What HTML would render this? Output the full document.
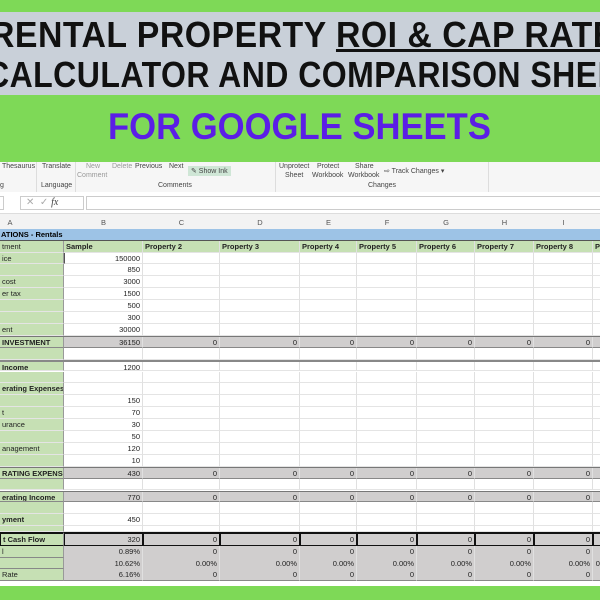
<!DOCTYPE html>
<html><head><meta charset="utf-8"><style>
*{margin:0;padding:0;box-sizing:border-box}
body{width:600px;height:600px;overflow:hidden;position:relative;background:#7ed957;font-family:"Liberation Sans",sans-serif}
.band{position:absolute;left:0;top:12px;width:600px;height:83px;background:#c9d0d9}
.t{position:absolute;white-space:nowrap;font-weight:bold;color:#111;font-size:36px;transform-origin:0 0;letter-spacing:0.5px}
.p{position:absolute;white-space:nowrap;font-weight:bold;color:#5b1ee6;font-size:37px;left:108px;top:106px;transform-origin:0 0;transform:scaleX(0.936)}
.rib{position:absolute;left:0;top:162px;width:600px;height:30px;background:#f6f6f6;font-size:7px;color:#444}
.rib span{position:absolute;white-space:nowrap}
.fb{position:absolute;left:0;top:192px;width:600px;height:22px;background:#fff;border-bottom:1px solid #ddd}
.ch{position:absolute;left:0;top:214px;width:600px;height:15px;background:#f3f3f3;font-size:7.5px;color:#555}
.ch span{position:absolute;top:4px;text-align:center}
.tbl{position:absolute;left:0;top:241px;width:600px;height:345px;background:#fff}
.row{position:absolute;left:0;width:620px;display:flex;font-size:7.5px;color:#222}
.row div{flex:none;height:100%;background:#fff;border-right:1px solid #e0e0e0;border-bottom:1px solid #e4e4e4;padding:0 2px;text-align:right;line-height:11px;white-space:nowrap;overflow:hidden}
.g div{background:#d0cece;border-bottom:1px solid #888}
.row div:first-child{background:#c6e0b4;text-align:left;border-right:1px solid #999}
.b div{font-weight:bold}
.c0{width:64px}.c1{width:79px}.c2{width:77px}.c3{width:80px}.c4{width:57px}.c5{width:60px}.c6{width:58px}.c7{width:59px}.c8{width:59px}.c9{width:27px}
.cf div{border:1px solid #111;border-top:2px solid #111}
</style></head><body>
<div class="band"></div>
<div class="t" style="left:-10px;top:14px;transform:scaleX(0.94)">RENTAL PROPERTY <span style="text-decoration:underline">ROI &amp; CAP RATE</span></div>
<div class="t" style="left:-14px;top:54px;transform:scaleX(0.89)">CALCULATOR AND COMPARISON SHEET</div>
<div class="p">FOR GOOGLE SHEETS</div>

<div class="rib">
<span style="left:2px;top:1px">Thesaurus</span><span style="left:42px;top:1px">Translate</span>
<span style="left:86px;top:1px;color:#999">New</span><span style="left:77px;top:10px;color:#999">Comment</span>
<span style="left:112px;top:1px;color:#999">Delete</span><span style="left:135px;top:1px">Previous</span><span style="left:169px;top:1px">Next</span>
<span style="left:188px;top:4px;background:#cfe6d6;padding:1px 3px">✎ Show Ink</span>
<span style="left:0px;top:20px">g</span><span style="left:41px;top:20px">Language</span><span style="left:158px;top:20px">Comments</span>
<span style="left:279px;top:1px">Unprotect</span><span style="left:285px;top:10px">Sheet</span>
<span style="left:317px;top:1px">Protect</span><span style="left:312px;top:10px">Workbook</span>
<span style="left:355px;top:1px">Share</span><span style="left:348px;top:10px">Workbook</span>
<span style="left:384px;top:5px">⇨ Track Changes ▾</span>
<span style="left:368px;top:20px">Changes</span>
<span style="left:36px;top:0;height:30px;border-left:1px solid #ddd"></span>
<span style="left:75px;top:0;height:30px;border-left:1px solid #ddd"></span>
<span style="left:275px;top:0;height:30px;border-left:1px solid #ddd"></span>
<span style="left:488px;top:0;height:30px;border-left:1px solid #ddd"></span>
</div>
<div class="fb">
<div style="position:absolute;left:-2px;top:4px;width:6px;height:14px;border:1px solid #ccc"></div>
<div style="position:absolute;left:20px;top:4px;width:64px;height:14px;border:1px solid #ccc;font-size:10px;color:#aaa;padding-left:5px;line-height:12px">✕ &nbsp;✓ <i style="color:#444;font-family:'Liberation Serif',serif">fx</i></div>
<div style="position:absolute;left:86px;top:4px;width:520px;height:14px;border:1px solid #ccc"></div>
</div>
<div class="ch">
<span style="left:0;width:20px">A</span><span style="left:64px;width:79px">B</span><span style="left:143px;width:77px">C</span><span style="left:220px;width:80px">D</span><span style="left:300px;width:57px">E</span><span style="left:357px;width:60px">F</span><span style="left:417px;width:58px">G</span><span style="left:475px;width:59px">H</span><span style="left:534px;width:59px">I</span>
</div>
<div style="position:absolute;left:0;top:229px;width:600px;height:12px;background:#9dc3e6;border-bottom:1px solid #555;font-size:7.5px;font-weight:bold;line-height:11px;padding-left:1px">ATIONS - Rentals</div>
<div class="tbl"></div>

<div class="row b" style="top:241px;height:11.5px"><div class="c0" style="font-weight:normal">tment</div><div class="c1" style="background:#c6e0b4;text-align:left">Sample</div><div class="c2" style="background:#c6e0b4;text-align:left">Property 2</div><div class="c3" style="background:#c6e0b4;text-align:left">Property 3</div><div class="c4" style="background:#c6e0b4;text-align:left">Property 4</div><div class="c5" style="background:#c6e0b4;text-align:left">Property 5</div><div class="c6" style="background:#c6e0b4;text-align:left">Property 6</div><div class="c7" style="background:#c6e0b4;text-align:left">Property 7</div><div class="c8" style="background:#c6e0b4;text-align:left">Property 8</div><div class="c9" style="background:#c6e0b4;text-align:left">P</div></div>

<div class="row" style="top:252.5px;height:11.9px"><div class="c0">ice</div><div class="c1" style="border-left:1px solid #555">150000</div><div class="c2"></div><div class="c3"></div><div class="c4"></div><div class="c5"></div><div class="c6"></div><div class="c7"></div><div class="c8"></div><div class="c9"></div></div>
<div class="row" style="top:264.4px;height:11.9px"><div class="c0"></div><div class="c1">850</div><div class="c2"></div><div class="c3"></div><div class="c4"></div><div class="c5"></div><div class="c6"></div><div class="c7"></div><div class="c8"></div><div class="c9"></div></div>
<div class="row" style="top:276.3px;height:11.9px"><div class="c0">cost</div><div class="c1">3000</div><div class="c2"></div><div class="c3"></div><div class="c4"></div><div class="c5"></div><div class="c6"></div><div class="c7"></div><div class="c8"></div><div class="c9"></div></div>
<div class="row" style="top:288.2px;height:11.9px"><div class="c0">er tax</div><div class="c1">1500</div><div class="c2"></div><div class="c3"></div><div class="c4"></div><div class="c5"></div><div class="c6"></div><div class="c7"></div><div class="c8"></div><div class="c9"></div></div>
<div class="row" style="top:300.1px;height:11.9px"><div class="c0"></div><div class="c1">500</div><div class="c2"></div><div class="c3"></div><div class="c4"></div><div class="c5"></div><div class="c6"></div><div class="c7"></div><div class="c8"></div><div class="c9"></div></div>
<div class="row" style="top:312px;height:11.9px"><div class="c0"></div><div class="c1">300</div><div class="c2"></div><div class="c3"></div><div class="c4"></div><div class="c5"></div><div class="c6"></div><div class="c7"></div><div class="c8"></div><div class="c9"></div></div>
<div class="row" style="top:323.9px;height:11.9px"><div class="c0">ent</div><div class="c1">30000</div><div class="c2"></div><div class="c3"></div><div class="c4"></div><div class="c5"></div><div class="c6"></div><div class="c7"></div><div class="c8"></div><div class="c9"></div></div>
<div class="row g" style="top:335.8px;height:11.9px;border-top:1px solid #777"><div class="c0" style="font-weight:bold">INVESTMENT</div><div class="c1">36150</div><div class="c2">0</div><div class="c3">0</div><div class="c4">0</div><div class="c5">0</div><div class="c6">0</div><div class="c7">0</div><div class="c8">0</div><div class="c9">0</div></div>
<div class="row" style="top:347.7px;height:11.9px"><div class="c0"></div><div class="c1"></div><div class="c2"></div><div class="c3"></div><div class="c4"></div><div class="c5"></div><div class="c6"></div><div class="c7"></div><div class="c8"></div><div class="c9"></div></div>
<div class="row" style="top:359.6px;height:11.9px;border-top:2px solid #888"><div class="c0" style="font-weight:bold">Income</div><div class="c1">1200</div><div class="c2"></div><div class="c3"></div><div class="c4"></div><div class="c5"></div><div class="c6"></div><div class="c7"></div><div class="c8"></div><div class="c9"></div></div>
<div class="row" style="top:371.5px;height:11.9px"><div class="c0"></div><div class="c1"></div><div class="c2"></div><div class="c3"></div><div class="c4"></div><div class="c5"></div><div class="c6"></div><div class="c7"></div><div class="c8"></div><div class="c9"></div></div>
<div class="row" style="top:383.4px;height:11.9px"><div class="c0" style="font-weight:bold">erating Expenses</div><div class="c1"></div><div class="c2"></div><div class="c3"></div><div class="c4"></div><div class="c5"></div><div class="c6"></div><div class="c7"></div><div class="c8"></div><div class="c9"></div></div>
<div class="row" style="top:395.3px;height:11.9px"><div class="c0"></div><div class="c1">150</div><div class="c2"></div><div class="c3"></div><div class="c4"></div><div class="c5"></div><div class="c6"></div><div class="c7"></div><div class="c8"></div><div class="c9"></div></div>
<div class="row" style="top:407.2px;height:11.9px"><div class="c0">t</div><div class="c1">70</div><div class="c2"></div><div class="c3"></div><div class="c4"></div><div class="c5"></div><div class="c6"></div><div class="c7"></div><div class="c8"></div><div class="c9"></div></div>
<div class="row" style="top:419.1px;height:11.9px"><div class="c0">urance</div><div class="c1">30</div><div class="c2"></div><div class="c3"></div><div class="c4"></div><div class="c5"></div><div class="c6"></div><div class="c7"></div><div class="c8"></div><div class="c9"></div></div>
<div class="row" style="top:431px;height:11.9px"><div class="c0"></div><div class="c1">50</div><div class="c2"></div><div class="c3"></div><div class="c4"></div><div class="c5"></div><div class="c6"></div><div class="c7"></div><div class="c8"></div><div class="c9"></div></div>
<div class="row" style="top:442.9px;height:11.9px"><div class="c0">anagement</div><div class="c1">120</div><div class="c2"></div><div class="c3"></div><div class="c4"></div><div class="c5"></div><div class="c6"></div><div class="c7"></div><div class="c8"></div><div class="c9"></div></div>
<div class="row" style="top:454.8px;height:11.9px"><div class="c0"></div><div class="c1">10</div><div class="c2"></div><div class="c3"></div><div class="c4"></div><div class="c5"></div><div class="c6"></div><div class="c7"></div><div class="c8"></div><div class="c9"></div></div>
<div class="row g" style="top:466.7px;height:11.9px;border-top:1px solid #777"><div class="c0" style="font-weight:bold">RATING EXPENSES</div><div class="c1">430</div><div class="c2">0</div><div class="c3">0</div><div class="c4">0</div><div class="c5">0</div><div class="c6">0</div><div class="c7">0</div><div class="c8">0</div><div class="c9">0</div></div>
<div class="row" style="top:478.6px;height:11.9px"><div class="c0"></div><div class="c1"></div><div class="c2"></div><div class="c3"></div><div class="c4"></div><div class="c5"></div><div class="c6"></div><div class="c7"></div><div class="c8"></div><div class="c9"></div></div>
<div class="row g" style="top:490.5px;height:11.9px;border-top:1px solid #777"><div class="c0" style="font-weight:bold">erating Income</div><div class="c1">770</div><div class="c2">0</div><div class="c3">0</div><div class="c4">0</div><div class="c5">0</div><div class="c6">0</div><div class="c7">0</div><div class="c8">0</div><div class="c9">0</div></div>
<div class="row" style="top:502.4px;height:11.9px"><div class="c0"></div><div class="c1"></div><div class="c2"></div><div class="c3"></div><div class="c4"></div><div class="c5"></div><div class="c6"></div><div class="c7"></div><div class="c8"></div><div class="c9"></div></div>
<div class="row" style="top:514.3px;height:11.9px"><div class="c0" style="font-weight:bold">yment</div><div class="c1">450</div><div class="c2"></div><div class="c3"></div><div class="c4"></div><div class="c5"></div><div class="c6"></div><div class="c7"></div><div class="c8"></div><div class="c9"></div></div>
<div class="row" style="top:526.2px;height:6px"><div class="c0"></div><div class="c1"></div><div class="c2"></div><div class="c3"></div><div class="c4"></div><div class="c5"></div><div class="c6"></div><div class="c7"></div><div class="c8"></div><div class="c9"></div></div>
<div class="row g cf" style="top:531.5px;height:14px"><div class="c0" style="font-weight:bold;line-height:12px">t Cash Flow</div><div class="c1" style="line-height:12px">320</div><div class="c2" style="line-height:12px">0</div><div class="c3" style="line-height:12px">0</div><div class="c4" style="line-height:12px">0</div><div class="c5" style="line-height:12px">0</div><div class="c6" style="line-height:12px">0</div><div class="c7" style="line-height:12px">0</div><div class="c8" style="line-height:12px">0</div><div class="c9" style="line-height:12px">0</div></div>
<div class="row g" style="top:545.5px;height:12px"><div class="c0">l</div><div class="c1" style="border-bottom:none">0.89%</div><div class="c2" style="border-bottom:none">0</div><div class="c3" style="border-bottom:none">0</div><div class="c4" style="border-bottom:none">0</div><div class="c5" style="border-bottom:none">0</div><div class="c6" style="border-bottom:none">0</div><div class="c7" style="border-bottom:none">0</div><div class="c8" style="border-bottom:none">0</div><div class="c9" style="border-bottom:none">0</div></div>
<div class="row g" style="top:557.5px;height:11.5px"><div class="c0"></div><div class="c1" style="border-bottom:none">10.62%</div><div class="c2" style="border-bottom:none">0.00%</div><div class="c3" style="border-bottom:none">0.00%</div><div class="c4" style="border-bottom:none">0.00%</div><div class="c5" style="border-bottom:none">0.00%</div><div class="c6" style="border-bottom:none">0.00%</div><div class="c7" style="border-bottom:none">0.00%</div><div class="c8" style="border-bottom:none">0.00%</div><div class="c9" style="border-bottom:none">0.00%</div></div>
<div class="row g" style="top:569px;height:12px"><div class="c0">Rate</div><div class="c1">6.16%</div><div class="c2">0</div><div class="c3">0</div><div class="c4">0</div><div class="c5">0</div><div class="c6">0</div><div class="c7">0</div><div class="c8">0</div><div class="c9">0</div></div>
<div style="position:absolute;left:0;top:581px;width:600px;height:5px;background:#fff"></div>
<div style="position:absolute;left:0;top:586px;width:600px;height:14px;background:#7ed957"></div>
</body></html>
